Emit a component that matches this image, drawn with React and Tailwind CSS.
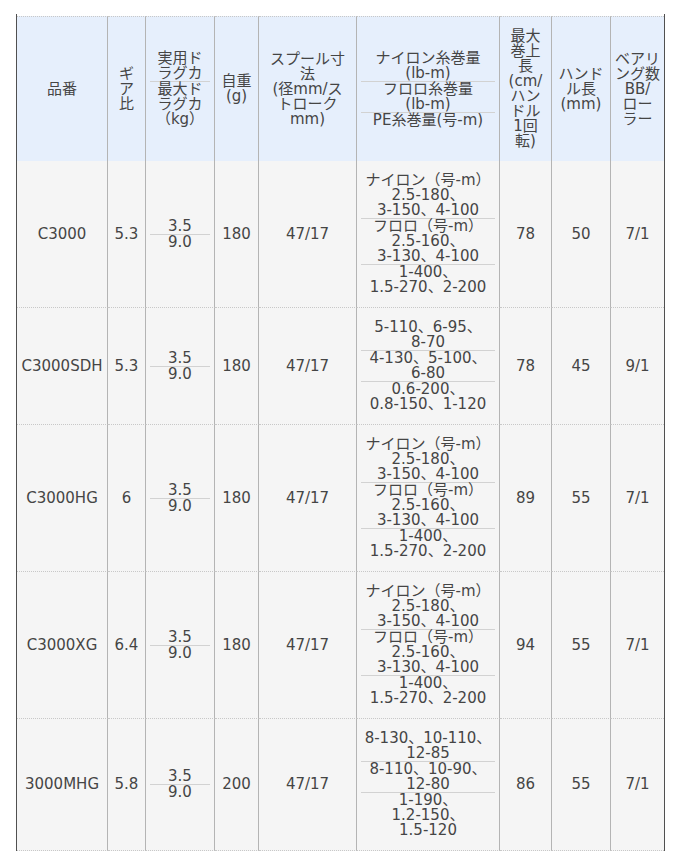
import React from "react";

const FONT = "font-['DejaVu_Sans','Noto_Sans_CJK_JP',sans-serif]";

function Lines({ lines }) {
  return (
    <div className="whitespace-nowrap">
      {lines.map((l, i) => (
        <div key={i}>{l}</div>
      ))}
    </div>
  );
}

function Split({ groups }) {
  return (
    <div className="flex w-full flex-col items-stretch">
      {groups.map((g, i) => (
        <React.Fragment key={i}>
          {i > 0 && <div className="h-px w-full bg-[#d2d2d2]" />}
          <Lines lines={g} />
        </React.Fragment>
      ))}
    </div>
  );
}

function Cell({ children, head, last }) {
  return (
    <div
      className={
        "flex flex-col items-center justify-center px-1 py-3 text-center " +
        (head
          ? "bg-[#e6effc] border-t border-[#c8c8c8] [border-top-style:dotted] "
          : "bg-[#f5f5f5] border-b border-[#c8c8c8] [border-bottom-style:dotted] ") +
        (last ? "" : "border-r border-r-[#b4b4b4] [border-right-style:solid]")
      }
    >
      {children}
    </div>
  );
}

const nylon = [
  ["ナイロン（号-m）", "2.5-180、", "3-150、4-100"],
  ["フロロ（号-m）", "2.5-160、", "3-130、4-100"],
  ["1-400、", "1.5-270、2-200"],
];

const rows = [
  { name: "C3000", gear: "5.3", w: "180", pe: nylon, len: "78", h: "50", bb: "7/1" },
  {
    name: "C3000SDH",
    gear: "5.3",
    w: "180",
    pe: [
      ["5-110、6-95、", "8-70"],
      ["4-130、5-100、", "6-80"],
      ["0.6-200、", "0.8-150、1-120"],
    ],
    len: "78",
    h: "45",
    bb: "9/1",
  },
  { name: "C3000HG", gear: "6", w: "180", pe: nylon, len: "89", h: "55", bb: "7/1" },
  { name: "C3000XG", gear: "6.4", w: "180", pe: nylon, len: "94", h: "55", bb: "7/1" },
  {
    name: "3000MHG",
    gear: "5.8",
    w: "200",
    pe: [
      ["8-130、10-110、", "12-85"],
      ["8-110、10-90、", "12-80"],
      ["1-190、", "1.2-150、", "1.5-120"],
    ],
    len: "86",
    h: "55",
    bb: "7/1",
  },
];

export default function App() {
  return (
    <div className={"min-h-[863px] bg-white pt-[14px] pl-4 text-[15px] leading-[15px] text-[#454545] " + FONT}>
      <div className="w-[649px] border-x border-[#505050] pt-[2px]">
        <div className="grid grid-cols-[91px_38px_69px_44px_98px_143px_52px_59px_53px]">
          <Cell head>
            <Lines lines={["品番"]} />
          </Cell>
          <Cell head>
            <Lines lines={["ギ", "ア", "比"]} />
          </Cell>
          <Cell head>
            <Split groups={[["実用ド", "ラグカ"], ["最大ド", "ラグカ", "（kg）"]]} />
          </Cell>
          <Cell head>
            <Lines lines={["自重", "(g)"]} />
          </Cell>
          <Cell head>
            <Lines lines={["スプール寸", "法", "(径mm/ス", "トローク", "mm)"]} />
          </Cell>
          <Cell head>
            <Split groups={[["ナイロン糸巻量", "(lb-m)"], ["フロロ糸巻量", "(lb-m)"], ["PE糸巻量(号-m)"]]} />
          </Cell>
          <Cell head>
            <Lines lines={["最大", "巻上", "長", "(cm/", "ハン", "ドル", "1回", "転)"]} />
          </Cell>
          <Cell head>
            <Lines lines={["ハンド", "ル長", "(mm)"]} />
          </Cell>
          <Cell head last>
            <Lines lines={["ベアリ", "ング数", "BB/", "ロー", "ラー"]} />
          </Cell>

          {rows.map((r) => (
            <React.Fragment key={r.name}>
              <Cell>
                <Lines lines={[r.name]} />
              </Cell>
              <Cell>
                <Lines lines={[r.gear]} />
              </Cell>
              <Cell>
                <Split groups={[["3.5"], ["9.0"]]} />
              </Cell>
              <Cell>
                <Lines lines={[r.w]} />
              </Cell>
              <Cell>
                <Lines lines={["47/17"]} />
              </Cell>
              <Cell>
                <Split groups={r.pe} />
              </Cell>
              <Cell>
                <Lines lines={[r.len]} />
              </Cell>
              <Cell>
                <Lines lines={[r.h]} />
              </Cell>
              <Cell last>
                <Lines lines={[r.bb]} />
              </Cell>
            </React.Fragment>
          ))}
        </div>
      </div>
    </div>
  );
}
